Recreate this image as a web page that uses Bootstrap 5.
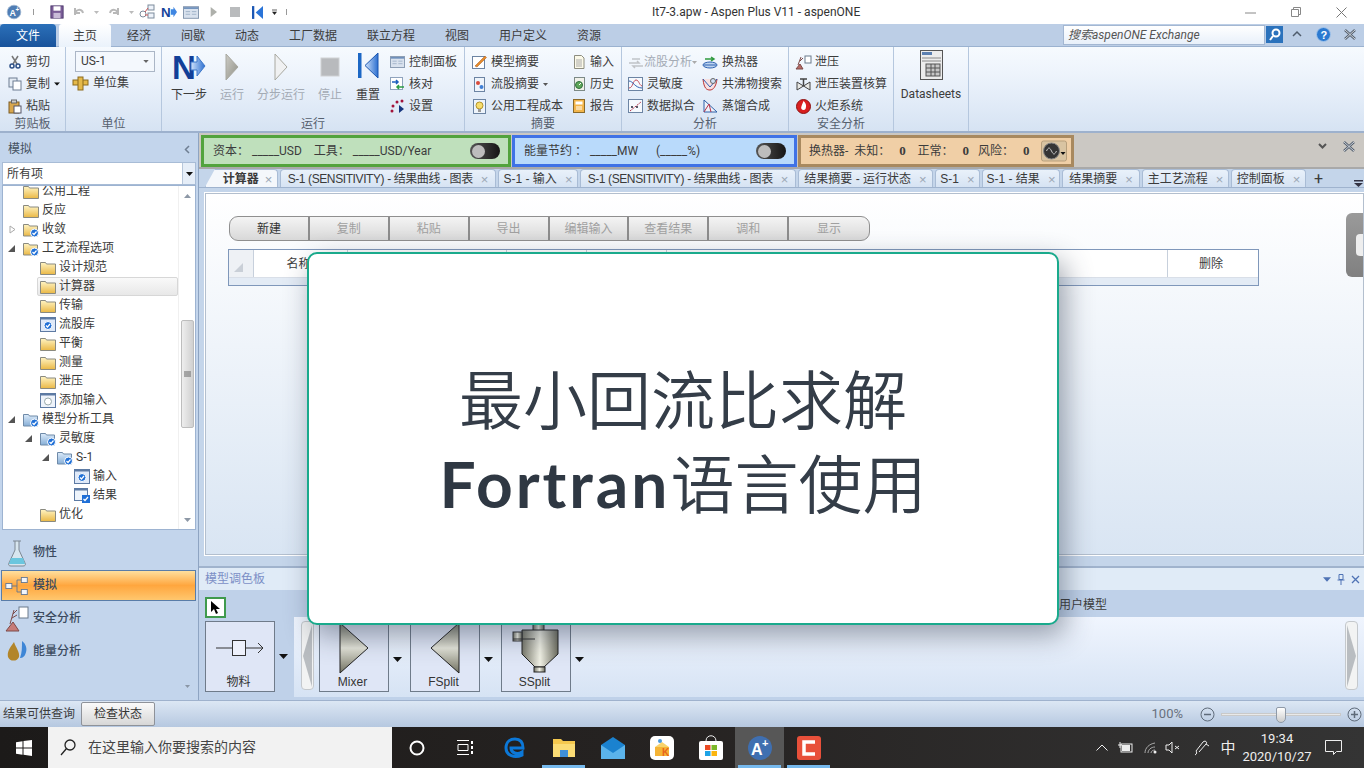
<!DOCTYPE html>
<html lang="zh-CN"><head><meta charset="utf-8"><title>It7-3.apw - Aspen Plus V11</title>
<link rel="stylesheet" href="https://cdn.jsdelivr.net/npm/bootstrap@5.3.0/dist/css/bootstrap.min.css">
<script src="https://cdn.jsdelivr.net/npm/bootstrap@5.3.0/dist/js/bootstrap.bundle.min.js"></script>
<style>
html,body{width:1364px;height:768px;overflow:hidden;margin:0}
body{font:12px/1.2 Roboto,"Noto Sans CJK SC",sans-serif;color:#3c3c3c;background:#c4d5ea;position:relative}
svg{display:block;flex:none;overflow:visible}
.app-title{height:24px;background:#fff}
.qa-icons{padding-left:6px;width:640px}
.q1{margin-left:11px}.q2{margin-left:16px}.q3{margin-left:9px}.q4{margin-left:5px}.q5{margin-left:6px}.q6{margin-left:13px}.q7{margin-left:12px}
.win-title{width:206px;font-size:12px;white-space:nowrap;color:#333;margin-left:12px}
.win-ctrl{margin-left:auto;width:119px;padding-right:17px}
.menu-row{height:23px;background:#bccee6;border-bottom:1px solid #9bb2d0}
.menu-file{width:56px;height:23px;line-height:25px;background:linear-gradient(#2b70b9,#19539b);color:#fff;border-radius:4px 4px 0 0;margin-right:3px}
.menu-on{width:52px;height:23px;line-height:25px;background:linear-gradient(#fff,#eaf2fb);border-radius:3px 3px 0 0;margin-right:1px}
.menu-it{padding:0 15px;line-height:25px}
.search-box{width:202px;height:20px;margin:1px 0 0 auto;background:linear-gradient(#fff,#e8f0fa);border:1px solid #a3b7d2;font-style:italic;padding:2px 4px;font-size:12px;color:#555}
.menu-end{width:99px;padding:1px 0 0 1px}
.me1{margin-left:8px}.me2{margin-left:14px}.me3{margin-left:13px}
.ribbon{height:86px;background:linear-gradient(#f6fafe,#eef4fc 30%,#d6e3f3);border-bottom:2px solid #9db1cd}
.rb-grp{border-right:1px solid #b5c7de;height:84px}
.g1{width:66px}.g2{width:96px}.g3{width:303px}.g4{width:157px}.g5{width:167px}.g6{width:105px}.g7{width:75px}
.rb-body{height:71px;padding-top:4px}
.g3 .rb-body{padding-top:3px}
.rb-lab{height:13px;line-height:13px;text-align:center;color:#56606e}
.rb-col{display:flex;flex-direction:column}
.g3 .rb-col{padding-top:1px}
.rb-row{height:22px;display:flex;align-items:center;gap:4px;white-space:nowrap}
.off{color:#a4abb5}
.rb-big{display:flex;flex-direction:column;align-items:center;padding-top:3px}
.rb-big span{margin-top:7px;white-space:nowrap}
.pl8{padding-left:8px}.pl1{padding-left:1px}.pl6{padding-left:6px}.pl7{padding-left:7px}
.sp-b{width:34px}.sp-c{width:64px}.sp-d{width:34px}.sp-e{width:42px}
.big-a{width:52px;margin-left:1px}
.wa{width:100px}.wb{width:74px}
.unit-sel{width:80px;height:21px;margin:0 0 0 9px;border:1px solid #abb6c6;background:#f4f8fd;padding:0 5px;line-height:19px}
.unit-row{margin:0 0 0 7px}
.side{width:199px;height:567px;border-right:1px solid #8ea4c2;background:#c3d5ec}
.side-head{height:29px;padding:3px 8px 0;font-size:12px;color:#44515f}
.side-sel{height:23px;margin:0 2px;background:#fff;border:1px solid #a8bcd6}
.side-sel i{width:13px;height:21px;border-left:1px solid #b7c7db;background:#e6eef8}
.tree-wrap{height:345px;margin:0 2px;background:#fff;border:1px solid #9db3d1;overflow:hidden}
.tree-list{width:175px;margin-top:-4px;height:400px}
.tr{height:19px;display:flex;align-items:center;gap:3px;white-space:nowrap;color:#3a3a3a}
.l1{padding-left:20px}.l2{padding-left:37px}.l3{padding-left:71px}
.a0{padding-left:4px}.a1{padding-left:21px}.a2{padding-left:38px}
.tri{width:9px;display:flex;justify-content:flex-end}
.tr-sel{background:linear-gradient(#f9f9f9,#e8e8e8);border:1px solid #d7d7d7;border-radius:2px;margin-left:34px;padding-left:2px}
.tree-bar{width:17px;background:#fff;border-left:1px solid #f0f0f0}
.thumb{width:13px;height:108px;margin:122px 0 90px;background:linear-gradient(90deg,#eee,#d0d0d0);border:1px solid #bdbdbd;border-radius:2px}
.nav-it{height:33px;gap:4px;padding-left:5px;font-weight:500;color:#3b4a5e;font-size:12px}
.nav-first{margin-top:6px}
.nav-on{height:31px;background:linear-gradient(#ffdf9d,#ffa63e 50%,#ffc76e);border:1px solid #5a7da8;margin:1px 2px 1px 1px;padding-left:3px}
.nav-more{height:32px;padding:17px 8px 0 0}
.work{width:1165px;height:567px}
.kpi{height:36px;background:#cbc8c3;border-bottom:2px solid #a9a9a9}
.kbox{height:32px;margin-top:2px;border-width:3px;border-style:solid;padding:0 4px 0 9px;white-space:nowrap}
.kg{width:310px;background:#bfe0bc;border-color:#52a33d;margin-left:2px;padding-right:8px}
.kb{width:285px;background:#b9dafb;border-color:#3f72e6;margin-left:1px;padding-right:8px}
.kt{width:276px;background:#f0cfa6;border-color:#a8895f;margin-left:1px;padding-left:8px}
.kt b{font-family:"Liberation Serif",serif;font-size:13px}
.kend{margin-left:auto;gap:16px;padding:0 9px 8px 0}
.sw{width:30px;height:16px;border-radius:8px;background:linear-gradient(90deg,#555,#151515);margin-left:auto}
.sw::after{content:"";display:block;width:13px;height:13px;border-radius:50%;background:#bdbdbd;margin:1.5px}
.tabbar{height:19px;background:#c4d5ea;padding-left:6px;border-bottom:1px solid #9fb3ce}
.tb{height:18px;line-height:19px;background:linear-gradient(#e9f1fa,#d6e3f3);border:1px solid #a9bcd5;border-bottom:0;border-radius:4px 4px 0 0;margin-right:2px;display:flex;justify-content:center;gap:8px;white-space:nowrap;color:#3a3a3a;font-family:"Liberation Sans","Noto Sans CJK SC",sans-serif}
.tb b{font-weight:400;color:#9ba6b4;font-size:13px;letter-spacing:0}
.tb-on{background:#f4f7fb;font-weight:700;width:73px;padding-left:12px;gap:6px;clip-path:polygon(10px 0,100% 0,100% 100%,0 100%)}
.t2{width:216px;letter-spacing:-.4px}.t3{width:80px}.t4{width:135px}.t5{width:45px}.t6{width:78px}.t7{width:78px}.t8{width:87px}.t9{width:75px}
.tab-plus{font-size:16px;line-height:16px;margin-left:6px}
.tab-menu{margin-left:auto;padding:5px 1px 0 0}
.pane{height:370px;padding:5px 0 3px 6px;background:#c4d5ea}
.pane-in{height:362px;background:linear-gradient(#fff,#d9e5f3);border:1px solid #b3bfce;outline:1px solid #fff;position:relative;padding:22px 0 0 23px}
.seg{width:641px;height:25px;border:1px solid #8f8f8f;border-radius:9px;background:linear-gradient(#f4f4f4,#d8d8d8)}
.seg div{width:80px;border-right:2px solid #8c8c8c;text-align:center;line-height:24px;color:#a0a0a0}
.seg div:first-child{color:#333}
.seg div:last-child{border:0}
.grid-h{width:1031px;height:37px;margin:8px 0 0 -1px;border:1px solid #7f97ba;background:#e3ebf5}
.grid-r{height:28px;background:#fff;border-bottom:1px solid #d9dfe8}
.grid-r div{border-right:1px solid #c7d0dc;line-height:28px;text-align:center}
.gc0{width:25px;background:#eef1f5}.gc1{width:94px;padding-right:4px}.gc2{width:159px}.gc3{width:80px}.gc4{width:501px}.gc5{flex:1;border:0!important;padding-right:4px}
.handle{position:absolute;right:0;top:19px;width:17px;height:64px;background:linear-gradient(#9a9a9a,#808080);border-radius:6px 0 0 6px}
.handle::after{content:"";display:block;width:7px;height:22px;background:#eee;border-radius:4px 0 0 4px;margin:21px 0 0 10px}
.pal{height:134px;background:#bfd1e9;border-top:2px solid #a0b3cd;margin-top:8px}
.pal-head{height:22px;background:#e0ebf7;padding:0 4px 0 6px;color:#7c8fc6}
.pal-ctrl{margin-left:auto;gap:6px}
.pal-main{height:110px}
.pal-left{width:95px;padding:7px 0 0 6px}
.cursor-box{width:21px;height:21px;background:#fff;border:2px solid #3f9a4d}
.pal-tool{display:flex;align-items:center;gap:4px;margin-top:3px}
.tool{width:70px;height:71px;border:1px solid #6f7b8a;background:#dfe6f6;display:flex;flex-direction:column;align-items:center;justify-content:flex-end;color:#333}
.tool span{padding:0 3px 2px 0;font-family:"Liberation Sans","Noto Sans CJK SC",sans-serif}
.tool>svg{margin-bottom:2px}
.tool>.stream{margin-bottom:19px}
.pal-right{flex:1}
.pal-tabs{height:27px;padding:8px 0 0 765px}
.pal-body{height:80px;background:linear-gradient(#f0f5fe,#d6e3f4);padding:4px 6px 0 7px}
.pal-btn{width:13px;height:69px;background:#f2f3f3;border:1px solid #c4c8cc;border-radius:4px;display:flex;align-items:center}
.pt1{margin-left:5px}.pt2{margin-left:8px}
.pal-r{margin-left:auto}
.status{height:27px;background:linear-gradient(#dce7f4,#b6c8e0);border-top:1px solid #9fb2cd;padding:0 2px 0 3px}
.chk{width:74px;height:24px;border:1px solid #8e9299;border-radius:2px;background:linear-gradient(#fafafa,#d7d7d7);margin-left:6px;text-align:center;line-height:22px;color:#333}
.zoom-area{margin-left:auto;gap:6px;color:#69717d;font-size:13px}
.zm{margin-left:11px}
.z-track{width:120px;height:3px;background:#e9e9e9;border:1px solid #c9c9c9;position:relative}
.z-thumb{position:absolute;left:54px;top:-7px;width:10px;height:16px;background:linear-gradient(#fff,#ccc);border:1px solid #8f9aa8;border-radius:2px 2px 5px 5px}
.taskbar{height:41px;background:linear-gradient(90deg,#1c1a19,#262322 50%,#343434);color:#fff}
.tk-win{width:48px}
.tk-search{width:344px;height:41px;background:#f2f2f2;color:#444;font-size:14px;gap:12px;padding-left:12px}
.tk-slot{width:49px;height:41px;position:relative}
.tk-act{background:#575757}
.tk-open::after{content:"";position:absolute;left:3px;right:3px;bottom:0;height:3px;background:#76b9ed}
.tray{margin-left:auto;color:#eee;padding-right:22px}
.tr1{width:21px}.tr2{width:27px}.tr3{width:21px}.tr4{width:29px}.tr5{width:24px}
.tk-clock{width:78px;margin-right:9px;text-align:center;line-height:18px;font-size:13px;white-space:nowrap}
.tk-ime{font-size:15px;width:20px;text-align:center}
.ov-card{position:absolute;left:307px;top:252px;width:752px;height:373px;background:#fff;border:2px solid #1aaa8c;border-radius:10px;box-shadow:6px 10px 28px rgba(40,50,70,.45);text-align:center;color:#343d48;padding-top:100px}
.ov-l1{font:350 64px/84px "Noto Sans CJK SC",sans-serif;white-space:nowrap}
.ov-l2{font:350 64px/84px "Noto Sans CJK SC",sans-serif;white-space:nowrap}
.ov-l2 b{font:700 64px/84px Lato,sans-serif;letter-spacing:3px;color:#2f3843}
</style></head>
<body>
<svg width="0" height="0" class="d-block">
<defs>
<linearGradient id="fg" x1="0" y1="0" x2="0" y2="1"><stop offset="0" stop-color="#fff4c4"/><stop offset="1" stop-color="#eab845"/></linearGradient>
<linearGradient id="fgb" x1="0" y1="0" x2="0" y2="1"><stop offset="0" stop-color="#dcebfa"/><stop offset="1" stop-color="#86aed6"/></linearGradient>
<linearGradient id="bl" x1="0" y1="0" x2="1" y2="0"><stop offset="0" stop-color="#cfe2fb"/><stop offset="1" stop-color="#2c6fd0"/></linearGradient>
<linearGradient id="gr" x1="0" y1="0" x2="1" y2="1"><stop offset="0" stop-color="#cdccc6"/><stop offset="1" stop-color="#8f9086"/></linearGradient>
<linearGradient id="mx" x1="0" y1="0" x2="0" y2="1"><stop offset="0" stop-color="#7f7f6d"/><stop offset=".5" stop-color="#e5e5da"/><stop offset="1" stop-color="#6f6f5f"/></linearGradient>
<linearGradient id="cy" x1="0" y1="0" x2="1" y2="0"><stop offset="0" stop-color="#77776a"/><stop offset=".5" stop-color="#f1f1e5"/><stop offset="1" stop-color="#6d6d5f"/></linearGradient>
<symbol id="fold" viewBox="0 0 16 14"><path d="M.5 1.500h5l1 1.500h9v10.500h-15z" fill="url(#fg)" stroke="#8a8a80"/></symbol>
<symbol id="fchk" viewBox="0 0 16 14"><path d="M.5 1.500h5l1 1.500h8v10h-14z" fill="url(#fg)" stroke="#8a8a80"/><circle cx="11.500" cy="10" r="4" fill="#1f6fd6" stroke="#fff"/><path d="M9.500 10l1.500 1.500 2.500-3" fill="none" stroke="#fff" stroke-width="1.200"/></symbol>
<symbol id="fbl" viewBox="0 0 16 14"><path d="M.5 1.500h5l1 1.500h8v10h-14z" fill="url(#fgb)" stroke="#6f8aa8"/><circle cx="11.500" cy="10" r="4" fill="#1f6fd6" stroke="#fff"/><path d="M9.500 10l1.500 1.500 2.500-3" fill="none" stroke="#fff" stroke-width="1.200"/></symbol>
<symbol id="form" viewBox="0 0 16 15"><rect x=".5" y=".5" width="15" height="14" fill="#dfe9f8" stroke="#5d7aa3"/><rect x=".5" y=".5" width="15" height="2" fill="#5d7aa3"/><circle cx="8" cy="8.500" r="4" fill="#1f6fd6" stroke="#fff"/><path d="M6 8.500l1.500 1.500 2.500-3" fill="none" stroke="#fff" stroke-width="1.200"/></symbol>
<symbol id="res" viewBox="0 0 16 15"><rect x=".5" y=".5" width="13" height="12" fill="#eef4fb" stroke="#5d7aa3"/><rect x=".5" y=".5" width="13" height="2" fill="#5d7aa3"/><rect x="8" y="7" width="8" height="8" fill="#1f6fd6"/><path d="M9.500 11l1.500 1.500 3-3.500" fill="none" stroke="#fff" stroke-width="1.200"/></symbol>
<symbol id="pg" viewBox="0 0 14 14"><path d="M2.500.5h7l2.500 2.500v10.500h-9.500z" fill="#fbf9e8" stroke="#8d8d80"/><path d="M4 5h6M4 7h6M4 9h6M4 11h6" stroke="#aaa"/></symbol>
<symbol id="dn" viewBox="0 0 9 5"><path d="M0 0h9L4.500 5z" fill="#111"/></symbol>
<symbol id="tc" viewBox="0 0 9 9"><path d="M8 1v7H1z" fill="#555"/></symbol>
</defs></svg>

<div class="app-title d-flex align-items-center">
  <div class="qa-icons d-flex align-items-center">
    <svg width="16" height="16" viewBox="0 0 20 18"><circle cx="10" cy="9" r="8.500" fill="#4f7db4" stroke="#9cb4cf"/><text x="4.500" y="14" font-family="Liberation Sans" font-weight="700" font-size="11" fill="#fff">A</text><text x="12" y="9" font-family="Liberation Sans" font-weight="700" font-size="8" fill="#fff">+</text></svg>
    <svg width="1" height="6" class="q1"><rect width="1" height="6" fill="#999"/></svg>
    <svg width="14" height="16" viewBox="0 0 16 16" class="q2"><rect x="1" y="1" width="14" height="14" fill="#7a5d97" stroke="#49356a"/><rect x="4" y="1.500" width="8" height="5" fill="#fff"/><rect x="4" y="9" width="8" height="6" fill="#c9bcd8"/></svg>
    <svg width="26" height="14" viewBox="0 0 26 14" class="q3"><path d="M2 10c0-6 7-7 8-2M2 3v5h5" fill="none" stroke="#b8b8b8" stroke-width="2"/><path d="M21 6h5l-2.500 3z" fill="#bbb"/></svg>
    <svg width="26" height="14" viewBox="0 0 26 14" class="q3"><path d="M10 10C10 4 3 3 2 8M10 3v5H5" fill="none" stroke="#b8b8b8" stroke-width="2"/><path d="M21 6h5l-2.500 3z" fill="#bbb"/></svg>
    <svg width="16" height="16" viewBox="0 0 16 16" class="q4"><circle cx="4" cy="10" r="3" fill="#fff" stroke="#7d8b9c"/><rect x="9" y="1" width="6" height="5" fill="#eef3fa" stroke="#7d8b9c"/><rect x="9" y="9" width="6" height="5" fill="#eef3fa" stroke="#7d8b9c"/><path d="M6 8l3-4M6 11h3" stroke="#c55" /></svg>
    <svg width="16" height="14" viewBox="0 0 18 14" class="q5"><text x="0" y="13" font-family="Liberation Sans" font-weight="900" font-size="15" fill="#16449a">N</text><path d="M11 4h3V1l4 6-4 6v-3h-3z" fill="#3f86e2"/></svg>
    <svg width="16" height="13" viewBox="0 0 18 14" class="q5"><rect x=".5" y=".5" width="17" height="13" fill="#d9e2ee" stroke="#7c8fa8"/><rect x="1" y="1" width="16" height="2" fill="#6f90bb"/><path d="M3 6h5M3 9h5M10 6h5M10 9h5" stroke="#9cafc5"/></svg>
    <svg width="7" height="14" class="q1" viewBox="0 0 10 14"><path d="M1 0l9 7-9 7z" fill="#aeb0ab"/></svg>
    <svg width="10" height="10" class="q6" viewBox="0 0 12 12"><rect width="12" height="12" fill="#b9bbbd"/></svg>
    <svg width="11" height="13" class="q7" viewBox="0 0 12 14"><rect width="2.500" height="14" fill="#1c57b4"/><path d="M12 0v14L4 7z" fill="#2a74d8"/></svg>
    <svg width="5" height="7" class="q3" viewBox="0 0 7 8"><rect width="7" height="1" fill="#222"/><path d="M0 3h7L3.500 7.500z" fill="#222"/></svg>
    <svg width="1" height="6" class="q3"><rect width="1" height="6" fill="#999"/></svg>
  </div>
  <div class="win-title">It7-3.apw - Aspen Plus V11 - aspenONE</div>
  <div class="win-ctrl d-flex justify-content-between align-items-center">
    <svg width="11" height="11" viewBox="0 0 11 11"><path d="M0 6h11" stroke="#888"/></svg>
    <svg width="10" height="10" viewBox="0 0 10 10"><path d="M.5 2.500h7v7h-7zM2.500 2.500v-2h7v7h-2" fill="none" stroke="#888"/></svg>
    <svg width="11" height="11" viewBox="0 0 11 11"><path d="M.5.500l10 10M10.500.500l-10 10" stroke="#777"/></svg>
  </div>
</div>

<div class="menu-row d-flex align-items-start">
  <div class="menu-file text-center">文件</div>
  <div class="menu-on text-center">主页</div>
  <div class="menu-it">经济</div><div class="menu-it">间歇</div><div class="menu-it">动态</div><div class="menu-it">工厂数据</div><div class="menu-it">联立方程</div><div class="menu-it">视图</div><div class="menu-it">用户定义</div><div class="menu-it">资源</div>
  <div class="search-box">搜索aspenONE Exchange</div>
  <div class="menu-end d-flex align-items-center">
    <svg width="18" height="18" viewBox="0 0 18 18"><rect width="17" height="17" y="1" fill="#2b72bc"/><circle cx="10" cy="8" r="3.500" fill="none" stroke="#fff" stroke-width="2"/><path d="M7 11l-3 4" stroke="#fff" stroke-width="2"/></svg>
    <svg width="10" height="8" viewBox="0 0 10 8" class="me1"><path d="M1 6l4-4 4 4" fill="none" stroke="#4f5c6c" stroke-width="1.500"/></svg>
    <svg width="15" height="15" viewBox="0 0 15 15" class="me2"><circle cx="7.500" cy="7.500" r="7" fill="#2b79d0" stroke="#a5c6eb"/><text x="4.500" y="12" font-family="Liberation Sans" font-weight="700" font-size="11" fill="#fff">?</text></svg>
    <svg width="12" height="11" viewBox="0 0 12 11" class="me3"><path d="M1 1l10 9M11 1L1 10" stroke="#55606e" stroke-width="2.500"/><path d="M1 1l10 9M11 1L1 10" stroke="#e8eef5" stroke-width=".8"/></svg>
  </div>
</div>

<div class="ribbon d-flex">
  <div class="rb-grp g1">
    <div class="rb-body rb-col pl8">
      <div class="rb-row"><svg width="14" height="14" viewBox="0 0 14 14"><path d="M4 1l5 8M10 1L5 9" stroke="#777" stroke-width="1.500"/><circle cx="4" cy="11" r="2" fill="none" stroke="#2c4f86" stroke-width="1.500"/><circle cx="10" cy="11" r="2" fill="none" stroke="#2c4f86" stroke-width="1.500"/></svg><span>剪切</span></div>
      <div class="rb-row"><svg width="14" height="14" viewBox="0 0 14 14"><rect x="1" y="1" width="8" height="9" fill="#e6edf5" stroke="#6d7d92"/><rect x="5" y="4" width="8" height="9" fill="#fff" stroke="#6d7d92"/></svg><span>复制</span><svg width="6" height="4" viewBox="0 0 9 5"><use href="#dn"/></svg></div>
      <div class="rb-row"><svg width="14" height="15" viewBox="0 0 14 15"><rect x="1" y="3" width="10" height="11" fill="#d9a74d" stroke="#7c5d24"/><rect x="3.500" y="1" width="5" height="3" fill="#ccc" stroke="#666"/><rect x="6" y="7" width="7" height="7" fill="#fff" stroke="#556"/></svg><span>粘贴</span></div>
    </div><div class="rb-lab">剪贴板</div>
  </div>
  <div class="rb-grp g2">
    <div class="rb-body">
      <div class="unit-sel d-flex justify-content-between align-items-center"><span>US-1</span><svg width="6" height="3" viewBox="0 0 9 5"><path d="M0 0h9L4.500 5z" fill="#666"/></svg></div>
      <div class="rb-row unit-row"><svg width="16" height="15" viewBox="0 0 16 15"><rect y="4" width="15" height="5" fill="#e5b949" stroke="#8b6a1c"/><rect x="5" y="1" width="5" height="13" fill="#e5b949" stroke="#8b6a1c"/></svg><span>单位集</span></div>
    </div><div class="rb-lab">单位</div>
  </div>
  <div class="rb-grp g3">
    <div class="rb-body d-flex">
      <div class="rb-big big-a"><svg width="32" height="28" viewBox="0 0 32 28"><text x="-1" y="26" font-family="Liberation Sans" font-weight="900" font-size="33" fill="#123f98" textLength="22">N</text><path d="M18 9h6V3l8 10-8 10v-6h-6z" fill="url(#bl)" stroke="#3e78c9"/></svg><span>下一步</span></div>
      <div class="rb-big sp-b off"><svg width="14" height="28" viewBox="0 0 14 28"><path d="M1 1l12 13L1 27z" fill="url(#gr)" stroke="#a8a8a0"/></svg><span>运行</span></div>
      <div class="rb-big sp-c off"><svg width="14" height="28" viewBox="0 0 14 28"><path d="M1 1l12 13L1 27z" fill="#f0f1f2" stroke="#a8a8a0"/></svg><span>分步运行</span></div>
      <div class="rb-big sp-d off"><svg width="20" height="28" viewBox="0 0 20 28"><rect x="1" y="5" width="18" height="18" fill="#b8babd" stroke="#cfd1d3"/></svg><span>停止</span></div>
      <div class="rb-big sp-e"><svg width="22" height="28" viewBox="0 0 22 28"><rect x="1" width="3.500" height="25" fill="#1c67c5"/><path d="M21 0v25L8 12.500z" fill="url(#bl)" stroke="#1c57b0"/></svg><span>重置</span></div>
      <div class="rb-col pl1">
        <div class="rb-row"><svg width="15" height="14" viewBox="0 0 18 14"><rect x=".5" y=".5" width="17" height="13" fill="#d9e2ee" stroke="#7c8fa8"/><rect x="1" y="1" width="16" height="2" fill="#6f90bb"/><path d="M3 6h5M3 9h5M10 6h5M10 9h5" stroke="#9cafc5"/></svg><span>控制面板</span></div>
        <div class="rb-row"><svg width="15" height="14" viewBox="0 0 15 14"><rect x=".5" y=".5" width="12" height="12" fill="#fff" stroke="#8fa3bd"/><path d="M2 5h6M6 3l2 2-2 2" stroke="#1f5fbe" fill="none" stroke-width="1.500"/><path d="M14 10H7M9 8l-2 2 2 2" stroke="#2d9c44" fill="none" stroke-width="1.500"/></svg><span>核对</span></div>
        <div class="rb-row"><svg width="15" height="15" viewBox="0 0 15 15"><path d="M9 6v8l5-4z" fill="#15357e"/><circle cx="2" cy="12" r="1.500" fill="#a2123a"/><circle cx="3" cy="7" r="1.500" fill="#a2123a"/><circle cx="7" cy="3" r="1.500" fill="#a2123a"/><circle cx="12" cy="2" r="1.500" fill="#a2123a"/></svg><span>设置</span></div>
      </div>
    </div><div class="rb-lab">运行</div>
  </div>
  <div class="rb-grp g4">
    <div class="rb-body d-flex pl7">
      <div class="rb-col wa">
        <div class="rb-row"><svg width="15" height="14" viewBox="0 0 15 14"><rect x=".5" y="1.500" width="12" height="12" fill="#fff" stroke="#6c84a3"/><path d="M3 11L13 1l1.500 1.500L5 12z" fill="#e58b2b" stroke="#a5551a" stroke-width=".5"/></svg><span>模型摘要</span></div>
        <div class="rb-row"><svg width="15" height="15" viewBox="0 0 15 15"><rect x="2.500" y=".5" width="10" height="14" fill="#eef4fb" stroke="#6c84a3"/><circle cx="6" cy="6" r="2" fill="#d84a3a"/><circle cx="9.500" cy="10" r="2" fill="#3f7fd6"/></svg><span>流股摘要</span><svg width="5" height="3" viewBox="0 0 9 5"><path d="M0 0h9L4.500 5z" fill="#555"/></svg></div>
        <div class="rb-row"><svg width="15" height="15" viewBox="0 0 15 15"><rect x="1.500" y=".5" width="12" height="14" fill="#eef4fb" stroke="#6c84a3"/><circle cx="7.500" cy="6.500" r="3.500" fill="#f7dd6c" stroke="#b3932a"/><rect x="6" y="10" width="3" height="3" fill="#999"/></svg><span>公用工程成本</span></div>
      </div>
      <div class="rb-col">
        <div class="rb-row"><svg width="14" height="14"><use href="#pg"/></svg><span>输入</span></div>
        <div class="rb-row"><svg width="14" height="14" viewBox="0 0 14 14"><rect x="2.500" y=".5" width="10" height="13" fill="#f1f1ea" stroke="#7c8a86"/><circle cx="7" cy="8" r="3.500" fill="#5fa85a" stroke="#2f6f3b"/><path d="M7 8l2-2" stroke="#fff"/></svg><span>历史</span></div>
        <div class="rb-row"><svg width="14" height="14" viewBox="0 0 14 14"><rect x="1.500" y=".5" width="11" height="13" fill="#f3b64c" stroke="#8a6a2a"/><rect x="3.500" y="2.500" width="7" height="3" fill="#fff"/><path d="M4 8h6M4 10h6" stroke="#fff"/></svg><span>报告</span></div>
      </div>
    </div><div class="rb-lab">摘要</div>
  </div>
  <div class="rb-grp g5">
    <div class="rb-body d-flex pl6">
      <div class="rb-col wb">
        <div class="rb-row off gap-0"><svg width="16" height="13" viewBox="0 0 16 13"><path d="M1 7h10l-2-2M15 10H5l2 2M4 3h8" stroke="#c0c3c7" stroke-width="1.500" fill="none"/></svg><span>流股分析</span><svg width="5" height="3" viewBox="0 0 9 5"><path d="M0 0h9L4.500 5z" fill="#aaa"/></svg></div>
        <div class="rb-row"><svg width="15" height="14" viewBox="0 0 15 14"><rect x=".5" y=".5" width="14" height="13" fill="#f6f9fd" stroke="#6c84a3"/><path d="M1 11c4 0 4-8 7-8s3 5 6 6" fill="none" stroke="#c14b5b"/><path d="M1 4c4 0 6 7 13 7" fill="none" stroke="#2f5fb0"/></svg><span>灵敏度</span></div>
        <div class="rb-row"><svg width="15" height="14" viewBox="0 0 15 14"><rect x=".5" y=".5" width="14" height="13" fill="#f6f9fd" stroke="#6c84a3"/><path d="M2 12L13 3" stroke="#b5324a" stroke-dasharray="2 1"/><circle cx="4" cy="8" r="1" fill="#223"/><circle cx="9" cy="8" r="1" fill="#223"/></svg><span>数据拟合</span></div>
      </div>
      <div class="rb-col">
        <div class="rb-row"><svg width="16" height="13" viewBox="0 0 16 13"><path d="M3 3h9M9 1l3 2-3 2" fill="none" stroke="#2f9a3e" stroke-width="1.500"/><ellipse cx="8" cy="9" rx="7" ry="3" fill="#bcd3ef" stroke="#2e62b2"/><path d="M2 9h12" stroke="#2e62b2"/></svg><span>换热器</span></div>
        <div class="rb-row"><svg width="16" height="15" viewBox="0 0 16 15"><path d="M1 2c1 10 4 11 7 11s6-3 7-11" fill="#f8e0e0" stroke="#b33"/><path d="M1 2l7 8 7-8" fill="none" stroke="#2e5fb5"/><circle cx="11" cy="4" r="2.500" fill="#cfe0f5" stroke="#666"/></svg><span>共沸物搜索</span></div>
        <div class="rb-row"><svg width="16" height="14" viewBox="0 0 16 14"><path d="M2 1v12h13z" fill="#eef3fa" stroke="#2d5fa8"/><path d="M2 13L7 5l2 8" fill="none" stroke="#b5324a"/></svg><span>蒸馏合成</span></div>
      </div>
    </div><div class="rb-lab">分析</div>
  </div>
  <div class="rb-grp g6">
    <div class="rb-body rb-col pl7">
      <div class="rb-row"><svg width="15" height="15" viewBox="0 0 15 15"><path d="M0 14l4-5 3 5zM2 10l3-8M4 6l3-3" fill="#b76b66" stroke="#7d4a48"/><rect x="9" y="1" width="6" height="7" fill="#fff" stroke="#6a7a8c"/></svg><span>泄压</span></div>
      <div class="rb-row"><svg width="15" height="16" viewBox="0 0 15 16"><path d="M1 6l13 8V6L1 14z" fill="#e8e8e4" stroke="#444"/><path d="M7.500 10V3M4 3h7" stroke="#444" stroke-width="1.500"/></svg><span>泄压装置核算</span></div>
      <div class="rb-row"><svg width="15" height="15" viewBox="0 0 15 15"><circle cx="7.500" cy="7.500" r="7" fill="#d91f1f" stroke="#8d1212"/><path d="M7.500 2c3 3 3 5 2 8a2.500 2.500 0 0 1-4 0c-1-2 1-5 2-8z" fill="#fff"/></svg><span>火炬系统</span></div>
    </div><div class="rb-lab">安全分析</div>
  </div>
  <div class="rb-grp g7">
    <div class="rb-big"><svg width="23" height="30" viewBox="0 0 23 30"><rect x=".5" y=".5" width="22" height="29" fill="#ececec" stroke="#555"/><rect x="2" y="2" width="10" height="3" fill="#5b7fb0"/><path d="M2 8h19M2 11h19" stroke="#888"/><rect x="6" y="14" width="14" height="12" fill="#c7c7c7" stroke="#555"/><path d="M6 18h14M6 22h14M11 14v12M15 14v12" stroke="#555"/></svg><span>Datasheets</span></div>
  </div>
</div>

<div class="d-flex">
  <aside class="side">
    <div class="side-head d-flex justify-content-between align-items-center"><span>模拟</span><svg width="6" height="9" viewBox="0 0 6 9"><path d="M5 1L1.500 4.500 5 8" fill="none" stroke="#6f7f93" stroke-width="1.500"/></svg></div>
    <div class="side-sel d-flex justify-content-between"><span class="ps-1 pt-1">所有项</span><i class="d-flex align-items-center justify-content-center"><svg width="7" height="4"><use href="#dn"/></svg></i></div>
    <div class="tree-wrap d-flex">
      <div class="tree-list">
        <div class="tr l1"><svg width="16" height="14"><use href="#fold"/></svg>公用工程</div>
        <div class="tr l1"><svg width="16" height="14"><use href="#fold"/></svg>反应</div>
        <div class="tr a0"><span class="tri"><svg width="7" height="9" viewBox="0 0 7 9"><path d="M1 1l5 3.500L1 8z" fill="#fff" stroke="#aaa"/></svg></span><svg width="16" height="14" class="ms-1"><use href="#fchk"/></svg>收敛</div>
        <div class="tr a0"><span class="tri"><svg width="9" height="9"><use href="#tc"/></svg></span><svg width="16" height="14" class="ms-1"><use href="#fchk"/></svg>工艺流程选项</div>
        <div class="tr l2"><svg width="16" height="14"><use href="#fold"/></svg>设计规范</div>
        <div class="tr tr-sel"><svg width="16" height="14"><use href="#fold"/></svg>计算器</div>
        <div class="tr l2"><svg width="16" height="14"><use href="#fold"/></svg>传输</div>
        <div class="tr l2"><svg width="16" height="15"><use href="#form"/></svg>流股库</div>
        <div class="tr l2"><svg width="16" height="14"><use href="#fold"/></svg>平衡</div>
        <div class="tr l2"><svg width="16" height="14"><use href="#fold"/></svg>测量</div>
        <div class="tr l2"><svg width="16" height="14"><use href="#fold"/></svg>泄压</div>
        <div class="tr l2"><svg width="16" height="15" viewBox="0 0 16 15"><rect x=".5" y=".5" width="15" height="14" fill="#eef3fa" stroke="#5d7aa3"/><rect x=".5" y=".5" width="15" height="2" fill="#5d7aa3"/><circle cx="8" cy="8.500" r="3.500" fill="#fff" stroke="#9aa"/></svg>添加输入</div>
        <div class="tr a0"><span class="tri"><svg width="9" height="9"><use href="#tc"/></svg></span><svg width="16" height="14" class="ms-1"><use href="#fbl"/></svg>模型分析工具</div>
        <div class="tr a1"><span class="tri"><svg width="9" height="9"><use href="#tc"/></svg></span><svg width="16" height="14" class="ms-1"><use href="#fbl"/></svg>灵敏度</div>
        <div class="tr a2"><span class="tri"><svg width="9" height="9"><use href="#tc"/></svg></span><svg width="16" height="14" class="ms-1"><use href="#fbl"/></svg>S-1</div>
        <div class="tr l3"><svg width="16" height="15"><use href="#form"/></svg>输入</div>
        <div class="tr l3"><svg width="16" height="15"><use href="#res"/></svg>结果</div>
        <div class="tr l2"><svg width="16" height="14"><use href="#fold"/></svg>优化</div>
      </div>
      <div class="tree-bar d-flex flex-column align-items-center">
        <svg width="7" height="4" class="mt-2" viewBox="0 0 7 4"><path d="M3.500 0L7 4H0z" fill="#8d98a6"/></svg>
        <div class="thumb d-flex align-items-center justify-content-center"><svg width="7" height="7" viewBox="0 0 7 7"><path d="M0 1h7M0 3h7M0 5h7" stroke="#666"/></svg></div>
        <svg width="7" height="4" viewBox="0 0 7 4"><path d="M0 0h7L3.500 4z" fill="#8d98a6"/></svg>
      </div>
    </div>
    <div class="nav-it nav-first d-flex align-items-center"><svg width="24" height="26" viewBox="0 0 20 26"><path d="M6 1h8M8 1v9L2 23c-1 2 0 3 2 3h12c2 0 3-1 2-3l-6-13V1" fill="#d8e6ef" stroke="#7c8792"/><path d="M4 18h12l2 6H2z" fill="#6bc6de"/></svg><span>物性</span></div>
    <div class="nav-it nav-on d-flex align-items-center"><svg width="24" height="24" viewBox="0 0 28 24"><rect x="1" y="9" width="7" height="6" fill="#f1f5fb" stroke="#5e7390"/><rect x="19" y="2" width="7" height="6" fill="#f1f5fb" stroke="#5e7390"/><rect x="19" y="16" width="7" height="6" fill="#f1f5fb" stroke="#5e7390"/><path d="M8 12h6M14 5v14M14 5h5M14 19h5" stroke="#5e7390" fill="none"/></svg><span>模拟</span></div>
    <div class="nav-it d-flex align-items-center"><svg width="24" height="26" viewBox="0 0 24 26"><path d="M1 25l7-9 6 9zM5 18l4-14M8 8l4-4M7 12l5-3" fill="#c77c78" stroke="#7d4a48"/><rect x="14" y="1" width="9" height="11" fill="#fff" stroke="#6a7a8c"/></svg><span>安全分析</span></div>
    <div class="nav-it d-flex align-items-center"><svg width="24" height="24" viewBox="0 0 24 24"><path d="M9 2C4 9 2 12 3 17a6 6 0 0 0 11 0c1-5-3-9-5-15z" fill="#b2852a"/><path d="M17 1c4 3 6 8 3 14-2 3-4 3-5 3 2-5 2-11 2-17z" fill="#3e86d6"/></svg><span>能量分析</span></div>
    <div class="nav-more d-flex justify-content-end"><svg width="5" height="3" viewBox="0 0 9 5"><path d="M0 0h9L4.500 5z" fill="#8a96a5"/></svg></div>
  </aside>

  <main class="work">
    <div class="kpi d-flex">
      <div class="kbox kg d-flex align-items-center"><span>资本：&nbsp;_____USD&nbsp;&nbsp;&nbsp;&nbsp;工具：&nbsp;_____USD/Year</span><span class="sw"></span></div>
      <div class="kbox kb d-flex align-items-center"><span>能量节约&nbsp;：&nbsp;_____MW&nbsp;&nbsp;&nbsp;&nbsp;&nbsp;&nbsp;(_____%)</span><span class="sw"></span></div>
      <div class="kbox kt d-flex align-items-center justify-content-between"><span>换热器-&nbsp;&nbsp;未知：&nbsp;&nbsp;&nbsp;<b>0</b>&nbsp;&nbsp;&nbsp;&nbsp;正常：&nbsp;&nbsp;&nbsp;<b>0</b>&nbsp;&nbsp;&nbsp;风险：&nbsp;&nbsp;&nbsp;<b>0</b></span><svg width="26" height="20" viewBox="0 0 25 20"><rect width="25" height="20" rx="2" fill="#d9c4a2" stroke="#b79f7c"/><circle cx="10" cy="10" r="8" fill="#353535" stroke="#888"/><path d="M5 10c2-4 3-4 5 0s3 4 5 0" fill="none" stroke="#ccc"/><path d="M19 11h5l-2.500 3z" fill="#111"/></svg></div>
      <div class="kend d-flex align-items-center">
        <svg width="9" height="8" viewBox="0 0 9 8"><path d="M1 2l3.500 3.500L8 2" fill="none" stroke="#555" stroke-width="2"/></svg>
        <svg width="12" height="11" viewBox="0 0 12 11"><path d="M1 1l10 9M11 1L1 10" stroke="#55606e" stroke-width="2.500"/><path d="M1 1l10 9M11 1L1 10" stroke="#e8eef5" stroke-width=".8"/></svg>
      </div>
    </div>
    <div class="tabbar d-flex align-items-end">
      <div class="tb tb-on">计算器<b>×</b></div>
      <div class="tb t2">S-1 (SENSITIVITY) - 结果曲线 - 图表<b>×</b></div>
      <div class="tb t3">S-1 - 输入<b>×</b></div>
      <div class="tb t2">S-1 (SENSITIVITY) - 结果曲线 - 图表<b>×</b></div>
      <div class="tb t4">结果摘要 - 运行状态<b>×</b></div>
      <div class="tb t5">S-1<b>×</b></div>
      <div class="tb t6">S-1 - 结果<b>×</b></div>
      <div class="tb t7">结果摘要<b>×</b></div>
      <div class="tb t8">主工艺流程<b>×</b></div>
      <div class="tb t9">控制面板<b>×</b></div>
      <div class="tab-plus">+</div>
      <div class="tab-menu"><svg width="9" height="7" viewBox="0 0 9 7"><rect width="9" height="1.500" fill="#334"/><path d="M0 3h9L4.500 7z" fill="#334"/></svg></div>
    </div>
    <div class="pane">
      <div class="pane-in">
        <div class="seg d-flex"><div>新建</div><div>复制</div><div>粘贴</div><div>导出</div><div>编辑输入</div><div>查看结果</div><div>调和</div><div>显示</div></div>
        <div class="grid-h">
          <div class="grid-r d-flex">
            <div class="gc0 d-flex align-items-end p-1"><svg width="11" height="11" viewBox="0 0 11 11"><path d="M10 1v9H1z" fill="#c9cfd7"/></svg></div>
            <div class="gc1">名称</div><div class="gc2"></div><div class="gc3"></div><div class="gc3"></div><div class="gc4"></div><div class="gc5">删除</div>
          </div>
        </div>
        <div class="handle"></div>
      </div>
    </div>
    <div class="pal">
      <div class="pal-head d-flex align-items-center"><span>模型调色板</span>
        <div class="pal-ctrl d-flex align-items-center">
          <svg width="8" height="5" viewBox="0 0 9 5"><path d="M0 0h9L4.500 5z" fill="#4f73b5"/></svg>
          <svg width="8" height="11" viewBox="0 0 8 11"><path d="M2 .5h4v5H2zM.5 6h7M4 6v5" fill="none" stroke="#4f73b5"/></svg>
          <svg width="9" height="9" viewBox="0 0 9 9"><path d="M1 1l7 7M8 1L1 8" stroke="#4f73b5" stroke-width="1.300"/></svg>
        </div>
      </div>
      <div class="pal-main d-flex">
        <div class="pal-left">
          <div class="cursor-box d-flex align-items-center justify-content-center"><svg width="11" height="13" viewBox="0 0 11 13"><path d="M1 0v11l3-3 2 5 2-1-2-4h4z" fill="#000"/></svg></div>
          <div class="pal-tool">
            <div class="tool"><svg width="48" height="16" class="stream" viewBox="0 0 48 16"><path d="M0 8h16M30 8h17M42 3l5 5-5 5" fill="none" stroke="#333"/><rect x="16.500" y=".5" width="13" height="15" fill="#eef1fb" stroke="#333"/></svg><span>物料</span></div>
            <svg width="9" height="5"><use href="#dn"/></svg>
          </div>
        </div>
        <div class="pal-right">
          <div class="pal-tabs">用户模型</div>
          <div class="pal-body d-flex">
            <div class="pal-btn"><svg width="11" height="62" viewBox="0 0 11 62"><path d="M10 0v62L1 31z" fill="#b9bdc1"/></svg></div>
            <div class="tool pt1"><svg width="32" height="50" viewBox="0 0 32 50"><path d="M2 0l28 25L2 50z" fill="url(#mx)" stroke="#222"/></svg><span>Mixer</span></div>
            <svg width="9" height="5" class="align-self-center ms-1"><use href="#dn"/></svg>
            <div class="tool pt2"><svg width="32" height="50" viewBox="0 0 32 50"><path d="M30 0L2 25l28 25z" fill="url(#mx)" stroke="#222"/></svg><span>FSplit</span></div>
            <svg width="9" height="5" class="align-self-center ms-1"><use href="#dn"/></svg>
            <div class="tool pt2"><svg width="46" height="50" viewBox="0 0 46 50"><rect x="20" y="0" width="11" height="8" fill="url(#cy)" stroke="#333"/><path d="M9 7h36v24L31 44H22L9 31z" fill="url(#cy)" stroke="#222"/><rect x="0" y="9" width="9" height="9" fill="url(#cy)" stroke="#333"/><path d="M0 16h22" stroke="#333"/><rect x="21" y="44" width="11" height="5" fill="url(#cy)" stroke="#222"/></svg><span>SSplit</span></div>
            <svg width="9" height="5" class="align-self-center ms-1"><use href="#dn"/></svg>
            <div class="pal-btn pal-r"><svg width="11" height="62" viewBox="0 0 11 62"><path d="M1 0v62L10 31z" fill="#b9bdc1"/></svg></div>
          </div>
        </div>
      </div>
    </div>
  </main>
</div>

<div class="status d-flex align-items-center">
  <span>结果可供查询</span><div class="chk">检查状态</div>
  <div class="zoom-area d-flex align-items-center"><span>100%</span>
    <svg width="15" height="15" class="zm" viewBox="0 0 15 15"><circle cx="7.500" cy="7.500" r="6.500" fill="none" stroke="#5f6b7a"/><path d="M4 7.500h7" stroke="#5f6b7a" stroke-width="1.500"/></svg>
    <div class="z-track"><div class="z-thumb"></div></div>
    <svg width="15" height="15" viewBox="0 0 15 15"><circle cx="7.500" cy="7.500" r="6.500" fill="none" stroke="#5f6b7a"/><path d="M4 7.500h7M7.500 4v7" stroke="#5f6b7a" stroke-width="1.500"/></svg>
  </div>
</div>

<div class="taskbar d-flex align-items-center">
  <div class="tk-win d-flex justify-content-center"><svg width="16" height="16" viewBox="0 0 16 16"><path d="M0 2.300l6.500-1v6.200H0zM7.500 1.100L16 0v7.500H7.500zM0 8.500h6.500v6.200l-6.500-1zM7.500 8.500H16V16l-8.500-1.200z" fill="#fff"/></svg></div>
  <div class="tk-search d-flex align-items-center"><svg width="16" height="17" viewBox="0 0 16 17"><circle cx="10" cy="6" r="5" fill="none" stroke="#222" stroke-width="1.300"/><path d="M6.500 9.500L1 16" stroke="#222" stroke-width="1.300"/></svg><span>在这里输入你要搜索的内容</span></div>
  <div class="tk-slot d-flex align-items-center justify-content-center"><svg width="16" height="16" viewBox="0 0 16 16"><circle cx="8" cy="8" r="6.500" fill="none" stroke="#fff" stroke-width="2"/></svg></div>
  <div class="tk-slot d-flex align-items-center justify-content-center"><svg width="17" height="15" viewBox="0 0 17 15"><path d="M0 .5h12M0 14.500h12M1 4.500h10v6H1z" fill="none" stroke="#fff"/><path d="M15 1v3M15 6v3M15 11v3" stroke="#fff" stroke-width="2"/></svg></div>
  <div class="tk-slot d-flex align-items-center justify-content-center"><svg width="21" height="21" viewBox="0 0 21 21"><path d="M2 11c0-6 4-9 9-9 5 0 8 3 8 9H7c0 5 6 7 11 4v3c-7 3-16 1-16-7z" fill="none" stroke="#0c78d8" stroke-width="3"/></svg></div>
  <div class="tk-slot tk-open d-flex align-items-center justify-content-center"><svg width="22" height="19" viewBox="0 0 22 19"><path d="M0 1h8l2 2h12v16H0z" fill="#f5c84e"/><rect x="0" y="6" width="22" height="13" fill="#fbdc75"/><path d="M7 12h8v7H7z" fill="#3f8fd8"/></svg></div>
  <div class="tk-slot d-flex align-items-center justify-content-center"><svg width="24" height="22" viewBox="0 0 24 22"><path d="M0 8l12-8 12 8v14H0z" fill="#1b82cf"/><path d="M0 8l12 8 12-8v14H0z" fill="#5bb3ea"/></svg></div>
  <div class="tk-slot d-flex align-items-center justify-content-center"><svg width="24" height="24" viewBox="0 0 24 24"><rect width="24" height="24" rx="5" fill="#fff"/><path d="M5 11h14v9H5z" fill="#f5b436"/><path d="M5 11l7-5 7 5z" fill="#f7d36c"/><circle cx="10" cy="5" r="2" fill="#4b9bdc"/><text x="12" y="20" font-family="Liberation Sans" font-weight="700" font-size="10" fill="#e8641d">K</text></svg></div>
  <div class="tk-slot d-flex align-items-center justify-content-center"><svg width="24" height="25" viewBox="0 0 24 25"><path d="M7 6c0-7 10-7 10 0" fill="none" stroke="#eee"/><rect y="6" width="24" height="19" rx="2" fill="#fff"/><rect x="6" y="10" width="5.500" height="5" fill="#ea4a24"/><rect x="12.500" y="10" width="5.500" height="5" fill="#7cb82a"/><rect x="6" y="16" width="5.500" height="5" fill="#1ea3e6"/><rect x="12.500" y="16" width="5.500" height="5" fill="#fbb50f"/></svg></div>
  <div class="tk-slot tk-act tk-open d-flex align-items-center justify-content-center"><svg width="24" height="24" viewBox="0 0 24 24"><circle cx="12" cy="12" r="12" fill="#3f6fb0"/><text x="3" y="19" font-family="Liberation Sans" font-weight="700" font-size="16" fill="#fff">A</text><text x="14" y="11" font-family="Liberation Sans" font-weight="700" font-size="11" fill="#fff">+</text></svg></div>
  <div class="tk-slot tk-open d-flex align-items-center justify-content-center"><svg width="24" height="24" viewBox="0 0 24 24"><rect width="24" height="24" rx="3" fill="#e8503a"/><path d="M18 6H7v12h11" fill="none" stroke="#fff" stroke-width="3.500"/></svg></div>
  <div class="tray d-flex align-items-center">
    <div class="tr1"><svg width="12" height="7" viewBox="0 0 12 7"><path d="M.5 6.500L6 1l5.500 5.500" fill="none" stroke="#eee"/></svg></div>
    <div class="tr2"><svg width="16" height="11" viewBox="0 0 16 11"><rect x="4" y="2" width="11" height="8" fill="none" stroke="#eee"/><rect x="5" y="3" width="8" height="6" fill="#eee"/><path d="M1 3h4M3 0v6" stroke="#eee"/></svg></div>
    <div class="tr3"><svg width="14" height="13" viewBox="0 0 14 13"><path d="M1 12C1 7 5 3 11 2M4 12c0-3 3-6 7-6M7 12c0-2 2-3 4-3" fill="none" stroke="#aaa"/><circle cx="11" cy="11" r="1.500" fill="#eee"/></svg></div>
    <div class="tr4"><svg width="15" height="13" viewBox="0 0 15 13"><path d="M1 4h3l3-3v11L4 9H1z" fill="none" stroke="#eee"/><path d="M10 5l4 3M14 5l-4 3" stroke="#eee"/></svg></div>
    <div class="tr5"><svg width="16" height="16" viewBox="0 0 16 16"><path d="M1 15c2-1 2-3 1-4l7-9c2-2 5 0 3 2l-7 8M12 4l3 2" fill="none" stroke="#eee"/></svg></div>
    <div class="tk-ime">中</div>
    <div class="tk-clock">19:34<br>2020/10/27</div>
    <svg width="17" height="15" viewBox="0 0 17 15"><path d="M.5.500h16v11h-5l-3 3v-3h-8z" fill="none" stroke="#eee"/></svg>
  </div>
</div>

<section class="ov-card">
  <div class="ov-l1">最小回流比求解</div>
  <div class="ov-l2"><b>Fortran</b>语言使用</div>
</section>
</body></html>
